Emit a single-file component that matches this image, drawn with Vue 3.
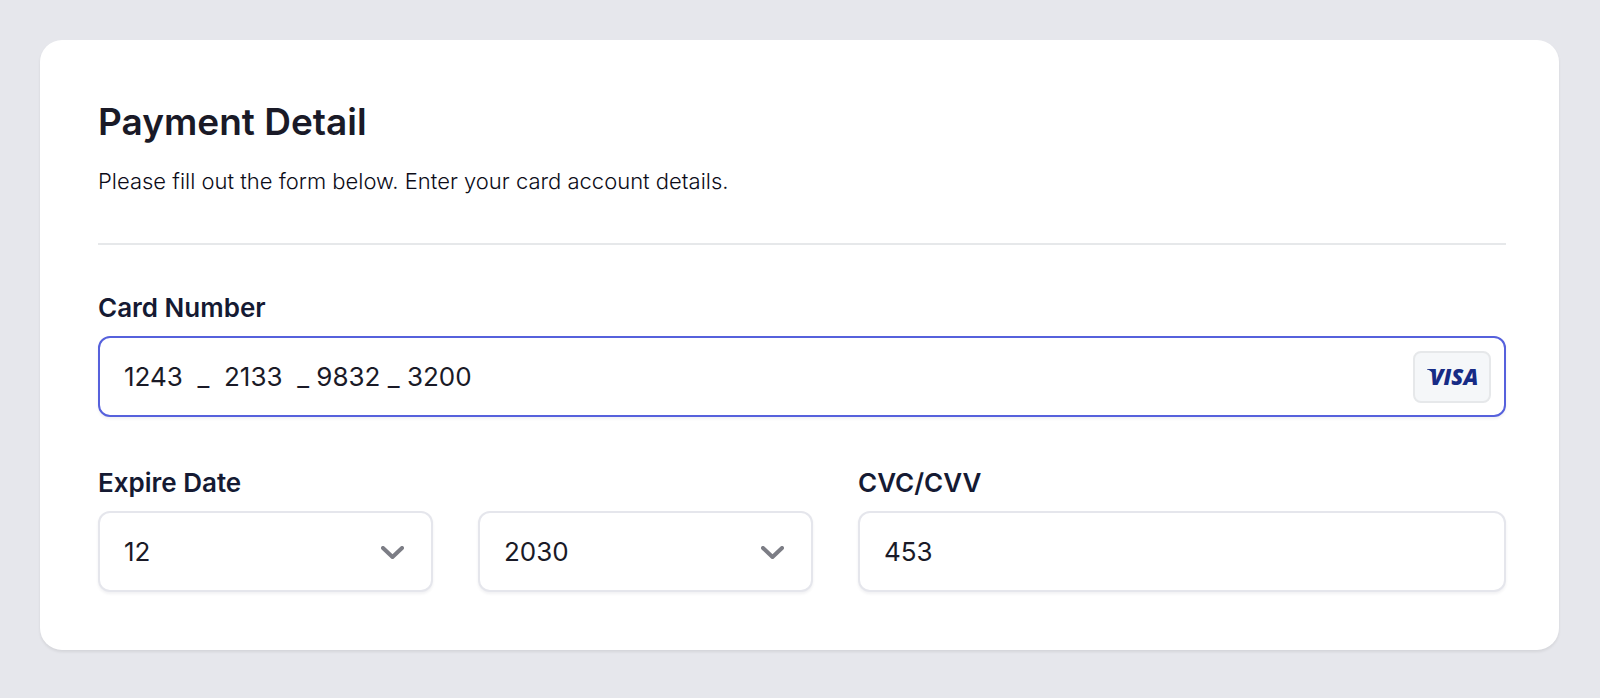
<template>
  <main class="page">
    <form class="card" @submit.prevent>
      <header class="card-header">
        <h1>Payment Detail</h1>
        <p>Please fill out the form below. Enter your card account details.</p>
      </header>

      <div class="field">
        <label for="card-number">Card Number</label>
        <div class="control">
          <input
            id="card-number"
            v-model="cardNumber"
            class="box active"
            type="text"
            inputmode="numeric"
          />
          <span class="brand">
            <svg viewBox="0 0 60 36" width="60" height="36" role="img" aria-label="Visa">
              <path d="M5 10 H13 L12 16 Q9 11 5 10.500 Z" />
              <text x="8" y="26">VISA</text>
            </svg>
          </span>
        </div>
      </div>

      <div class="row">
        <div class="field">
          <label for="month">Expire Date</label>
          <div class="control">
            <select id="month" v-model="month" class="box">
              <option v-for="m in 12" :key="m" :value="m">{{ m }}</option>
            </select>
            <svg class="chevron" viewBox="0 0 23 14" width="23" height="14" aria-hidden="true">
              <path d="M2 2 L11.500 11 L21 2" />
            </svg>
          </div>
        </div>

        <div class="field">
          <div class="control">
            <select v-model="year" class="box" aria-label="Expire year">
              <option v-for="y in years" :key="y" :value="y">{{ y }}</option>
            </select>
            <svg class="chevron" viewBox="0 0 23 14" width="23" height="14" aria-hidden="true">
              <path d="M2 2 L11.500 11 L21 2" />
            </svg>
          </div>
        </div>

        <div class="field">
          <label for="cvc">CVC/CVV</label>
          <input id="cvc" v-model="cvc" class="box" type="text" inputmode="numeric" />
        </div>
      </div>
    </form>
  </main>
</template>

<script setup>
import { ref } from 'vue'

const cardNumber = ref('1243  _  2133  _ 9832 _ 3200')
const month = ref(12)
const year = ref(2030)
const cvc = ref('453')

const years = Array.from({ length: 10 }, (_, i) => 2024 + i)
</script>

<style>
body {
  background: #e6e7ec;
}
</style>

<style scoped>
.page {
  padding: 40px 41px 40px 40px;
  font-family: Inter, "Liberation Sans", sans-serif;
  color: #1a1a27;
}

.card {
  padding: 58px 53px 58px 58px;
  background: #fff;
  border-radius: 22px;
  box-shadow: 0 2px 3px rgba(0, 0, 0, 0.08);
}

.card-header {
  padding-bottom: 47px;
  margin-bottom: 47px;
  border-bottom: 2px solid #e6e8ea;
}

h1 {
  margin: 0 0 20px;
  font-size: 37px;
  font-weight: 600;
  line-height: 48px;
}

p {
  margin: 0;
  font-size: 22px;
  font-weight: 300;
  line-height: 30px;
  color: #0c0c18;
}

.field {
  display: flex;
  flex-direction: column;
  gap: 12px;
  min-width: 0;
}

label {
  font-size: 26px;
  font-weight: 600;
  line-height: 32px;
  color: #151a33;
}

.control {
  position: relative;
}

.box {
  display: block;
  box-sizing: border-box;
  width: 100%;
  height: 81px;
  padding: 0 24px;
  border: 2px solid #e5e6ec;
  border-radius: 12px;
  background: #fff;
  box-shadow: 0 2px 3px rgba(20, 20, 50, 0.06);
  font-family: inherit;
  font-size: 26px;
  font-weight: 400;
  color: #1a1a27;
  outline: none;
  appearance: none;
}

.box:focus,
.box.active {
  border-color: #5661dc;
}

.brand {
  position: absolute;
  top: 15px;
  right: 15px;
  display: flex;
  align-items: center;
  justify-content: center;
  box-sizing: border-box;
  width: 78px;
  height: 52px;
  border: 2px solid #e6e8ea;
  border-radius: 8px;
  background: #f5f7f9;
}

.brand svg {
  fill: #172b85;
}

.brand text {
  font-family: "Open Sans", sans-serif;
  font-size: 22px;
  font-style: italic;
  font-weight: 800;
}

.chevron {
  position: absolute;
  top: 35px;
  right: 29px;
  fill: none;
  stroke: #7c7d85;
  stroke-width: 4;
  stroke-linecap: round;
  stroke-linejoin: round;
  pointer-events: none;
}

.row {
  display: grid;
  grid-template-columns: 335fr 335fr 648fr;
  align-items: end;
  gap: 45px;
  margin-top: 50px;
}
</style>
